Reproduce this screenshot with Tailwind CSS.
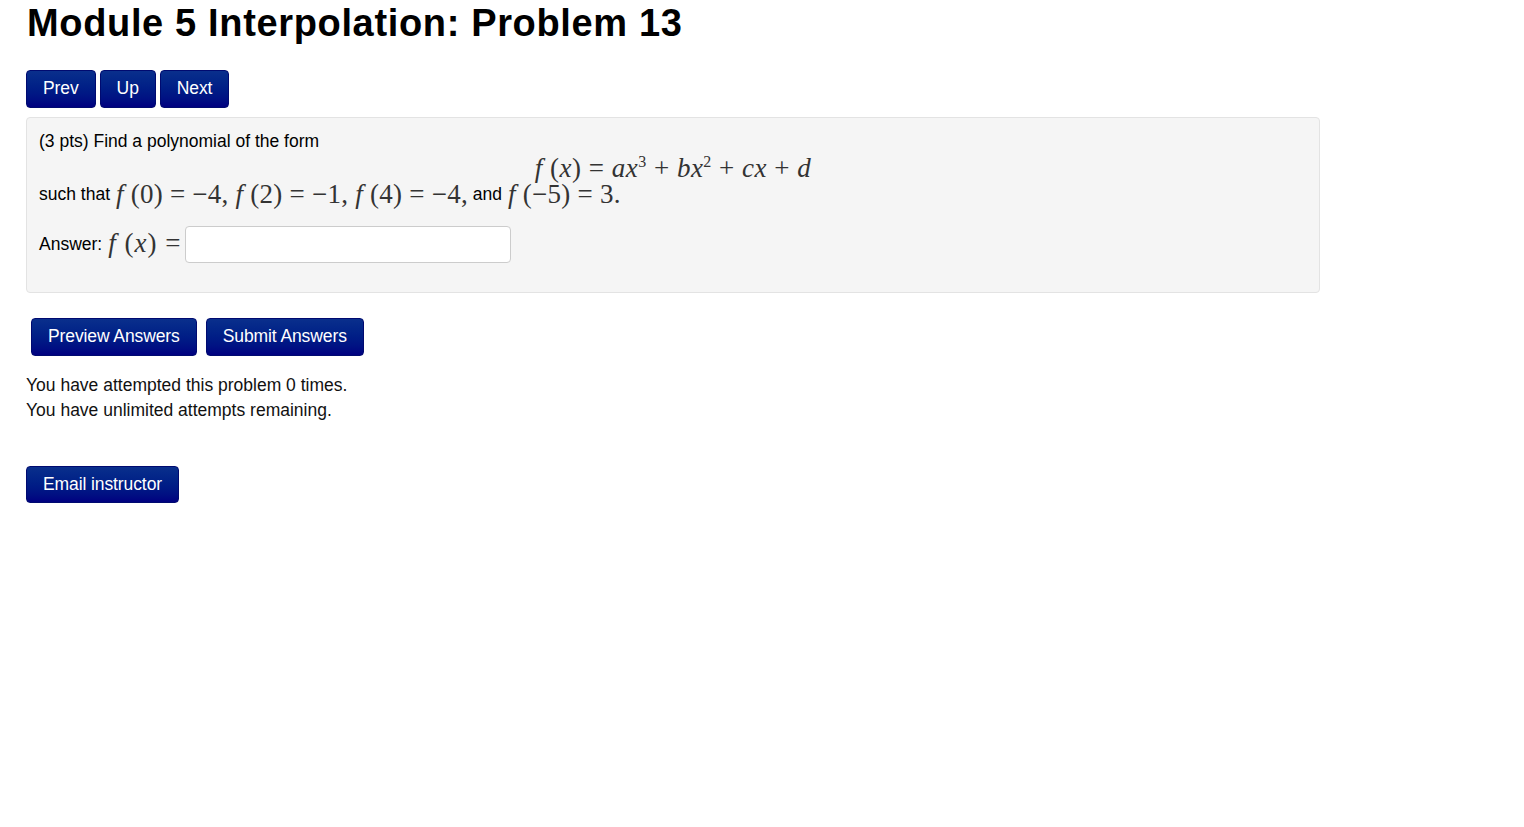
<!DOCTYPE html>
<html lang="en">
<head>
    <meta charset="UTF-8">
    <title>Module 5 Interpolation: Problem 13</title>
    <script src="https://cdn.jsdelivr.net/npm/@tailwindcss/browser@4"></script>
</head>
<body class="bg-white text-[#111] font-['Liberation_Sans',Arial,sans-serif] text-[17.5px] leading-[25px]">
<div class="pl-[26px] w-[1320px]">
    <h1 class="text-[38px] leading-[44px] tracking-[0.65px] font-bold text-black pl-px pt-px mb-[-1px]">Module 5 Interpolation: Problem 13</h1>

    <!-- Navigation -->
    <div class="flex gap-[4px] mt-[26px]">
        <button class="h-[38px] pb-[2px] px-4 rounded border border-[#000a70] bg-gradient-to-b from-[#0a2f8c] to-[#000080] text-white text-[17.5px] tracking-[-0.1px]">Prev</button>
        <button class="h-[38px] pb-[2px] px-4 rounded border border-[#000a70] bg-gradient-to-b from-[#0a2f8c] to-[#000080] text-white text-[17.5px] tracking-[-0.1px]">Up</button>
        <button class="h-[38px] pb-[2px] px-4 rounded border border-[#000a70] bg-gradient-to-b from-[#0a2f8c] to-[#000080] text-white text-[17.5px] tracking-[-0.1px]">Next</button>
    </div>

    <!-- Problem -->
    <div class="mt-[9px] h-[176px] bg-[#f5f5f5] border border-[#e3e3e3] rounded px-3 pt-[11px] text-black">
        <p>(3 pts) Find a polynomial of the form</p>
        <div class="flex justify-center h-[26px] pt-px font-['Liberation_Serif',serif] text-[27px] leading-[26px] tracking-[0.5px] text-[#333]">
            <span><i>f</i> (<i>x</i>) = <i>ax</i><sup class="text-[16px] top-[-10px]">3</sup> + <i>bx</i><sup class="text-[16px] top-[-10px]">2</sup> + <i>cx</i> + <i>d</i></span>
        </div>
        <p class="flex items-center h-[27px] mt-px whitespace-pre">such that <span class="font-['Liberation_Serif',serif] text-[27px] tracking-[0.25px] text-[#333] ml-px"><i>f</i> (0) = −4, <i>f</i> (2) = −1, <i>f</i> (4) = −4,</span> and <span class="font-['Liberation_Serif',serif] text-[27px] tracking-[0.25px] text-[#333] ml-px"><i>f</i> (−5) = 3.</span></p>
        <div class="flex items-center mt-[18px] h-[37px]">
            <span>Answer:</span>
            <span class="font-['Liberation_Serif',serif] text-[27px] tracking-[1px] text-[#333] ml-[6px] mb-[3px]"><i>f</i> (<i>x</i>) =</span>
            <input type="text" class="ml-[4px] w-[326px] h-[37px] bg-white border border-[#ccc] rounded">
        </div>
    </div>

    <!-- Answers -->
    <div class="flex gap-[9px] ml-[5px] mt-[25px]">
        <button class="h-[38px] pb-[2px] px-4 rounded border border-[#000a70] bg-gradient-to-b from-[#0a2f8c] to-[#000080] text-white text-[17.5px] tracking-[-0.1px]">Preview Answers</button>
        <button class="h-[38px] pb-[2px] px-4 rounded border border-[#000a70] bg-gradient-to-b from-[#0a2f8c] to-[#000080] text-white text-[17.5px] tracking-[-0.1px]">Submit Answers</button>
    </div>

    <p class="mt-[17px]">You have attempted this problem 0 times.<br>You have unlimited attempts remaining.</p>

    <button class="mt-[43px] block h-[37px] px-4 rounded border border-[#000a70] bg-gradient-to-b from-[#0a2f8c] to-[#000080] text-white text-[17.5px] tracking-[-0.1px]">Email instructor</button>
</div>
</body>
</html>
